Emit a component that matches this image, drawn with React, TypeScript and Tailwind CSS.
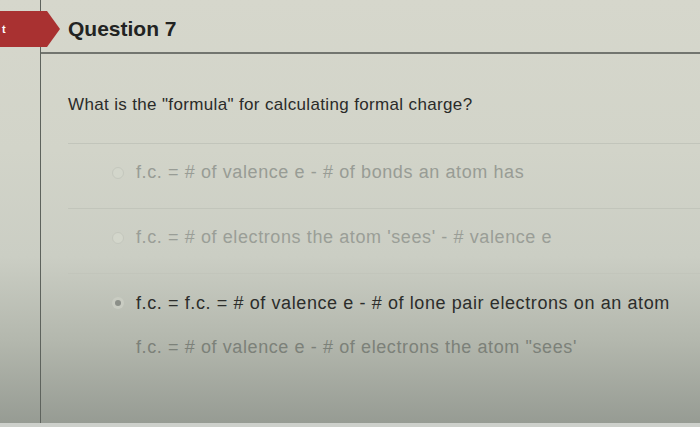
import React from "react";

const options = [
  { text: "f.c. = # of valence e - # of bonds an atom has", tone: "text-[#989c95]", radio: "ring", row: "h-[65px] pb-[6px]" },
  { text: "f.c. = # of electrons the atom 'sees' - # valence e", tone: "text-[#9a9e97]", radio: "ring", row: "h-[65px] pb-[6px]" },
  { text: "f.c. = f.c. = # of valence e - # of lone pair electrons on an atom", tone: "text-[#2c2d2b]", radio: "dot", row: "h-[60px]" },
  { text: "f.c. = # of valence e - # of electrons the atom \"sees'", tone: "text-[#7c8179]", radio: "none", row: "h-[30px]" },
];

function Radio({ kind }: { kind: string }) {
  if (kind === "dot") {
    return (
      <span className="flex h-[12px] w-[12px] shrink-0 items-center justify-center rounded-full bg-[#c9ccc2]">
        <span className="h-[6px] w-[6px] rounded-full bg-[#8b8f88]" />
      </span>
    );
  }
  if (kind === "ring") {
    return <span className="h-[12px] w-[12px] shrink-0 rounded-full border border-[#c4c7bd] bg-[#d3d6cb]" />;
  }
  return <span className="h-[12px] w-[12px] shrink-0" />;
}

export default function App() {
  return (
    <div className="relative flex h-[427px] w-[700px] flex-col overflow-hidden bg-[linear-gradient(180deg,#d6d7cc_0%,#d2d4c9_35%,#cbcec4_60%,#b3b7ad_80%,#959a92_100%)] font-['Liberation_Sans',Arial,sans-serif]">
      {/* red status tag lies over the column line */}
      <div className="absolute left-0 top-[11px] flex h-[36px] items-center">
        <div className="flex h-full w-[47px] items-center bg-[#a93131] pl-[2px] text-[11px] font-bold leading-none text-white">
          <span>t</span>
        </div>
        <div className="h-0 w-0 border-y-[18px] border-l-[13px] border-y-transparent border-l-[#a93131]" />
      </div>

      <div className="ml-[40px] flex flex-1 flex-col border-l border-[#5e635d]">
        <div className="flex h-[54px] items-center border-b-2 border-[#72756f] pl-[27px] pt-[6px]">
          <span className="text-[21px] font-bold text-[#222322]">Question 7</span>
        </div>

        <div className="pl-[27px]">
          <p className="pt-[38px] pb-[25px] text-[17px] tracking-[0.35px] text-[#2a2b29]">
            What is the "formula" for calculating formal charge?
          </p>

          <ul>
            {options.map((o, i) => (
              <li
                key={i}
                className={`flex items-center gap-[12px] pl-[44px] ${i < 3 ? "border-t border-[#c2c5bb]" : ""} ${o.row}`}
              >
                <Radio kind={o.radio} />
                <span className={`whitespace-nowrap text-[18px] tracking-[0.6px] ${o.tone}`}>{o.text}</span>
              </li>
            ))}
          </ul>
        </div>
      </div>
      <div className="h-[4px] bg-[#cdd0cb]" />
    </div>
  );
}
